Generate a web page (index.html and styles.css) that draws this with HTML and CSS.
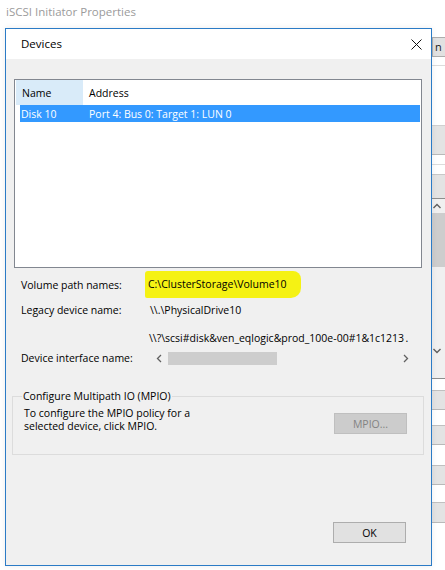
FILE: index.html
```html
<!DOCTYPE html>
<html>
<head>
<meta charset="utf-8">
<link rel="stylesheet" href="styles.css">
</head>
<body>
<div class="bgwin">
  <div class="bg-title">iSCSI Initiator Properties</div>
  <div class="bg-strip">
    <div class="bg-btn">n</div>
    <div class="bg-line l1"></div>
    <div class="bg-block b1"></div>
    <div class="bg-line l2"></div>
    <div class="bg-block b2"></div>
    <div class="bg-scroll">
      <svg class="bg-arrow" width="13" height="14" viewBox="0 0 13 14"><path d="M1.5 9 L5 5.5 L8.5 9" stroke="#606060" stroke-width="1.4" fill="none"/></svg>
      <div class="bg-thumb"></div>
      <svg class="bg-arrow down" width="13" height="14" viewBox="0 0 13 14"><path d="M1.5 5 L5 8.5 L8.5 5" stroke="#606060" stroke-width="1.4" fill="none"/></svg>
    </div>
    <div class="bg-block b3"></div>
    <div class="bg-block b4"></div>
    <div class="bg-block b5"></div>
    <div class="bg-block b6"></div>
  </div>
</div>

<div class="dialog">
  <div class="titlebar">
    <span class="title">Devices</span>
    <svg class="close" width="11" height="11" viewBox="0 0 11 11"><path d="M0.5 0.5 L10.5 10.5 M10.5 0.5 L0.5 10.5" stroke="#111" stroke-width="1" fill="none"/></svg>
  </div>
  <div class="dlg-body">
    <div class="list">
      <div class="list-head">
        <div class="col-name">Name</div>
        <div class="col-addr">Address</div>
      </div>
      <div class="row selected">
        <div class="cell-name">Disk 10</div>
        <div class="cell-addr">Port 4: Bus 0: Target 1: LUN 0</div>
      </div>
    </div>

    <div class="props">
      <div class="label r1">Volume path names:</div>
      <div class="value r1"><span class="hl">C:\ClusterStorage\Volume10</span></div>
      <div class="label r2">Legacy device name:</div>
      <div class="value r2 legacy">\\.\PhysicalDrive10</div>
      <div class="label r3">Device interface name:</div>
      <div class="value r3">
        <div class="longval">\\?\scsi#disk&amp;ven_eqlogic&amp;prod_100e-00#1&amp;1c1213&#8228;</div>
        <div class="hscroll">
          <svg class="arr" width="17" height="13" viewBox="0 0 17 13"><path d="M10 3 L6.5 6.5 L10 10" stroke="#606060" stroke-width="1.3" fill="none"/></svg>
          <div class="track"><div class="thumb"></div></div>
          <svg class="arr" width="17" height="13" viewBox="0 0 17 13"><path d="M7 3 L10.5 6.5 L7 10" stroke="#606060" stroke-width="1.3" fill="none"/></svg>
        </div>
      </div>
    </div>

    <fieldset class="group">
      <legend>Configure Multipath IO (MPIO)</legend>
      <div class="group-row">
        <div class="group-text">To configure the MPIO policy for a<br>selected device, click MPIO.</div>
        <button class="btn disabled">MPIO...</button>
      </div>
    </fieldset>

    <div class="footer">
      <button class="btn">OK</button>
    </div>
  </div>
</div>
</body>
</html>
```

FILE: styles.css
```css
html, body {
  margin: 0;
  padding: 0;
}
body {
  width: 445px;
  height: 570px;
  overflow: hidden;
  position: relative;
  background: #ffffff;
  font-family: "Open Sans", "Noto Sans", sans-serif;
  font-size: 10.5px;
  color: #000;
}

/* background window */
.bgwin {
  position: relative;
  height: 570px;
}
.bg-title {
  padding: 3px 0 0 6px;
  height: 17px;
  line-height: 17px;
  font-size: 11.5px;
  color: #9b9b9b;
}
.bg-strip {
  position: absolute;
  left: 432px;
  top: 0;
  width: 13px;
  display: flex;
  flex-direction: column;
}
.bg-btn {
  margin-top: 37px;
  height: 18px;
  background: #e1e1e1;
  border: 1px solid #adadad;
  border-right: none;
  font-size: 11px;
  line-height: 18px;
  padding-left: 2px;
  color: #222;
  overflow: hidden;
}
.bg-line {
  height: 1px;
  background: #dcdcdc;
}
.l1 { margin-top: 8px; }
.bg-block {
  background: #e3e3e3;
  border-bottom: 1px solid #b9b9b9;
}
.b1 { margin-top: 59px; height: 28px; border-top: 1px solid #d0d0d0; }
.l2 { margin-top: 9px; }
.b2 { margin-top: 9px; height: 23px; border-top: 1px solid #c8c8c8; border-bottom: 1px solid #8e8e8e; }
.bg-scroll {
  height: 179px;
  background: #f0f0f0;
  border-bottom: 1px solid #8e8e8e;
  display: flex;
  flex-direction: column;
}
.bg-arrow {
  display: block;
  flex: 0 0 14px;
}
.bg-thumb {
  height: 54px;
  background: #cdcdcd;
}
.bg-arrow.down { margin-top: auto; margin-bottom: 20px; }
.b3 { margin-top: 11px; height: 18px; border-top: 1px solid #c0c0c0; }
.b4 { margin-top: 15px; height: 18px; border-top: 1px solid #c0c0c0; }
.b5 { margin-top: 20px; height: 18px; border-top: 1px solid #c0c0c0; }
.b6 { margin-top: 17px; height: 19px; border-top: 1px solid #c0c0c0; }

/* dialog */
.dialog {
  position: absolute;
  left: 5px;
  top: 28px;
  width: 427px;
  height: 538px;
  box-sizing: border-box;
  border: 1px solid #2b7bc6;
  background: #f0f0f0;
  display: flex;
  flex-direction: column;
  box-shadow: 0 0 6px rgba(0,0,0,0.08);
}
.titlebar {
  height: 30px;
  background: #ffffff;
  display: flex;
  align-items: center;
  justify-content: space-between;
  padding: 0 9px 0 15px;
  flex: 0 0 auto;
}
.title {
  font-size: 11.5px;
  color: #000;
  margin-top: -1px;
}
.close {
  display: block;
}
.dlg-body {
  flex: 1 1 auto;
  display: flex;
  flex-direction: column;
  padding: 20px 0 0 0;
}

/* list view */
.list {
  margin: 0 9px 0 8px;
  height: 189px;
  box-sizing: border-box;
  background: #ffffff;
  border: 1px solid #828790;
}
.list-head {
  display: flex;
  height: 25px;
  align-items: stretch;
}
.col-name {
  margin-left: 1px;
  width: 61px;
  padding-left: 6px;
  background: #d9ebf9;
  display: flex;
  align-items: center;
}
.col-addr {
  padding-left: 6px;
  display: flex;
  align-items: center;
}
.row {
  display: flex;
  height: 17px;
  align-items: center;
  margin: 0 1px 0 5px;
}
.row.selected {
  background: #3399ff;
  color: #ffffff;
}
.cell-name {
  width: 68px;
  padding-left: 1px;
}
.cell-addr {
  white-space: nowrap;
}

/* properties */
.props {
  display: grid;
  grid-template-columns: 127px 1fr;
  padding-left: 15px;
  margin-top: 3px;
}
.label, .value {
  display: flex;
  align-items: center;
  white-space: nowrap;
}
.r1 { height: 27px; }
.r2 { height: 24px; }
.r3 { height: 46px; }
.label.r3 { padding-top: 26px; box-sizing: border-box; }
.hl {
  display: inline-block;
  background: #f5f214;
  padding: 6px 14px 7px 3px;
  margin-left: -3px;
  border-radius: 3px 8px 10px 2px;
}
.legacy { padding-left: 2px; }
.value.r3 {
  flex-direction: column;
  align-items: flex-start;
  justify-content: flex-start;
}
.longval {
  padding-left: 1px;
  height: 16px;
  line-height: 16px;
  margin-top: 8px;
}
.hscroll {
  margin-top: 6px;
  margin-left: 3px;
  width: 263px;
  height: 13px;
  display: flex;
  align-items: stretch;
}
.arr { display: block; flex: 0 0 17px; }
.track {
  flex: 1 1 auto;
  display: flex;
}
.thumb {
  width: 109px;
  background: #cdcdcd;
}

/* group box */
.group {
  margin: 22px 7px 0 6px;
  padding: 4px 10px 0 11px;
  height: 65px;
  box-sizing: border-box;
  border: 1px solid #dcdcdc;
}
.group legend {
  padding: 0 1px;
  margin-left: -2px;
  line-height: 13px;
}
.group-row {
  display: flex;
  justify-content: space-between;
  align-items: flex-start;
  padding-right: 6px;
}
.group-text {
  line-height: 13px;
}
.btn {
  width: 73px;
  height: 21px;
  box-sizing: border-box;
  background: #e1e1e1;
  border: 1px solid #adadad;
  font-family: inherit;
  font-size: 10.5px;
  color: #000;
  padding: 0;
  margin: 0;
}
.btn.disabled {
  background: #cccccc;
  border-color: #bfbfbf;
  color: #838383;
  margin-top: 6px;
}
.footer {
  margin-top: auto;
  margin-bottom: 22px;
  display: flex;
  justify-content: flex-end;
  padding-right: 25px;
}
```
